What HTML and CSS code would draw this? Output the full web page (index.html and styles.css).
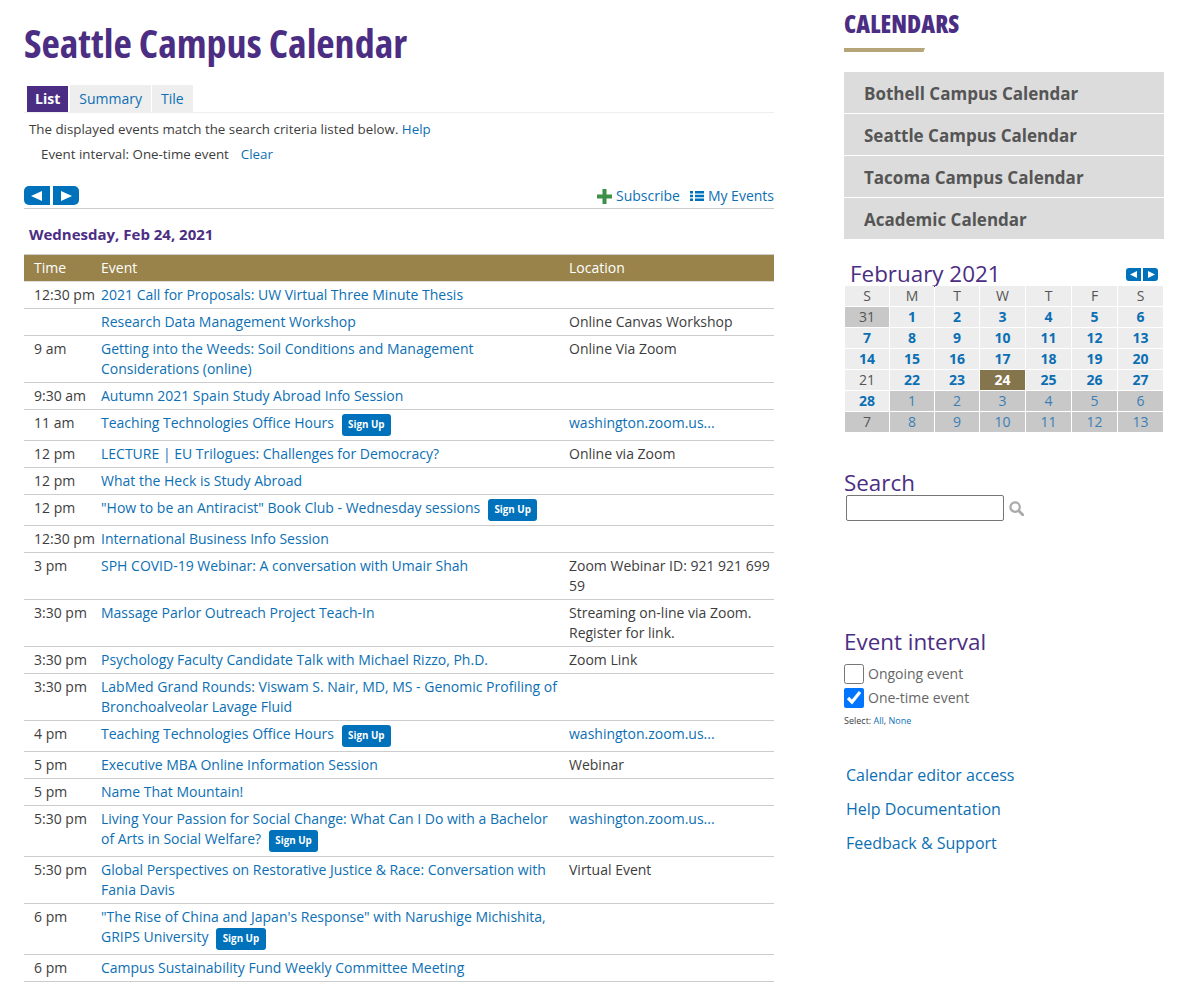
FILE: index.html
```html
<!DOCTYPE html>
<html lang="en">
<head>
<meta charset="utf-8">
<title>Seattle Campus Calendar</title>
<link rel="stylesheet" href="styles.css">
</head>
<body>
<div class="page">
<main class="main">
  <h1 class="title">Seattle Campus Calendar</h1>
  <nav class="tabs">
    <a class="tab active">List</a>
    <a class="tab">Summary</a>
    <a class="tab">Tile</a>
  </nav>
  <p class="note">The displayed events match the search criteria listed below. <a class="link">Help</a></p>
  <p class="filter"><span>Event interval: One-time event</span><a class="link">Clear</a></p>
  <div class="toolbar">
    <div class="arrows">
      <span class="arrow"><svg width="12" height="10" viewBox="0 0 12 10"><path d="M11 0v10L0 5z" fill="#fff"/></svg></span>
      <span class="arrow"><svg width="12" height="10" viewBox="0 0 12 10"><path d="M1 0v10l11-5z" fill="#fff"/></svg></span>
    </div>
    <div class="actions">
      <a class="link action"><svg width="15" height="15" viewBox="0 0 15 15"><path d="M5.500 0h4v5.500H15v4H9.500V15h-4V9.500H0v-4h5.500z" fill="#3d9147"/></svg>Subscribe</a>
      <a class="link action"><svg width="14" height="12" viewBox="0 0 14 12"><path d="M0 1h3v2.500H0zM0 4.800h3v2.500H0zM0 8.600h3v2.500H0zM5 1h9v2.500H5zM5 4.800h9v2.500H5zM5 8.600h9v2.500H5z" fill="#0072bc"/></svg>My Events</a>
    </div>
  </div>
  <h2 class="day">Wednesday, Feb 24, 2021</h2>
  <table class="events">
    <colgroup><col class="c-time"><col class="c-event"><col class="c-loc"></colgroup>
    <thead><tr><th>Time</th><th>Event</th><th>Location</th></tr></thead>
    <tbody>
      <tr><td>12:30 pm</td><td><a class="link">2021 Call for Proposals: UW Virtual Three Minute Thesis</a></td><td></td></tr>
      <tr><td></td><td><a class="link">Research Data Management Workshop</a></td><td>Online Canvas Workshop</td></tr>
      <tr><td>9 am</td><td><a class="link">Getting into the Weeds: Soil Conditions and Management Considerations (online)</a></td><td>Online Via Zoom</td></tr>
      <tr><td>9:30 am</td><td><a class="link">Autumn 2021 Spain Study Abroad Info Session</a></td><td></td></tr>
      <tr><td>11 am</td><td><a class="link">Teaching Technologies Office Hours</a> <a class="signup">Sign Up</a></td><td><a class="link">washington.zoom.us...</a></td></tr>
      <tr><td>12 pm</td><td><a class="link">LECTURE | EU Trilogues: Challenges for Democracy?</a></td><td>Online via Zoom</td></tr>
      <tr><td>12 pm</td><td><a class="link">What the Heck is Study Abroad</a></td><td></td></tr>
      <tr><td>12 pm</td><td><a class="link">"How to be an Antiracist" Book Club - Wednesday sessions</a> <a class="signup">Sign Up</a></td><td></td></tr>
      <tr><td>12:30 pm</td><td><a class="link">International Business Info Session</a></td><td></td></tr>
      <tr><td>3 pm</td><td><a class="link">SPH COVID-19 Webinar: A conversation with Umair Shah</a></td><td>Zoom Webinar ID: 921 921 699 59</td></tr>
      <tr><td>3:30 pm</td><td><a class="link">Massage Parlor Outreach Project Teach-In</a></td><td>Streaming on-line via Zoom. Register for link.</td></tr>
      <tr><td>3:30 pm</td><td><a class="link">Psychology Faculty Candidate Talk with Michael Rizzo, Ph.D.</a></td><td>Zoom Link</td></tr>
      <tr><td>3:30 pm</td><td><a class="link">LabMed Grand Rounds: Viswam S. Nair, MD, MS - Genomic Profiling of Bronchoalveolar Lavage Fluid</a></td><td></td></tr>
      <tr><td>4 pm</td><td><a class="link">Teaching Technologies Office Hours</a> <a class="signup">Sign Up</a></td><td><a class="link">washington.zoom.us...</a></td></tr>
      <tr><td>5 pm</td><td><a class="link">Executive MBA Online Information Session</a></td><td>Webinar</td></tr>
      <tr><td>5 pm</td><td><a class="link">Name That Mountain!</a></td><td></td></tr>
      <tr><td>5:30 pm</td><td><a class="link">Living Your Passion for Social Change: What Can I Do with a Bachelor of Arts in Social Welfare?</a> <a class="signup">Sign Up</a></td><td><a class="link">washington.zoom.us...</a></td></tr>
      <tr><td>5:30 pm</td><td><a class="link">Global Perspectives on Restorative Justice &amp; Race: Conversation with Fania Davis</a></td><td>Virtual Event</td></tr>
      <tr><td>6 pm</td><td><a class="link">"The Rise of China and Japan's Response" with Narushige Michishita, GRIPS University</a> <a class="signup">Sign Up</a></td><td></td></tr>
      <tr><td>6 pm</td><td><a class="link">Campus Sustainability Fund Weekly Committee Meeting</a></td><td></td></tr>
    </tbody>
  </table>
</main>
<aside class="side">
  <h2 class="side-title">CALENDARS</h2>
  <div class="side-rule"></div>
  <ul class="menu">
    <li>Bothell Campus Calendar</li>
    <li>Seattle Campus Calendar</li>
    <li>Tacoma Campus Calendar</li>
    <li>Academic Calendar</li>
  </ul>
  <div class="cal-head">
    <h3 class="month">February 2021</h3>
    <div class="mini-arrows">
      <span class="mini"><svg width="8" height="7" viewBox="0 0 8 7"><path d="M7 0v7L0 3.500z" fill="#fff"/></svg></span>
      <span class="mini"><svg width="8" height="7" viewBox="0 0 8 7"><path d="M1 0v7l7-3.500z" fill="#fff"/></svg></span>
    </div>
  </div>
  <div class="cal">
    <span class="dow">S</span><span class="dow">M</span><span class="dow">T</span><span class="dow">W</span><span class="dow">T</span><span class="dow">F</span><span class="dow">S</span>
    <span class="out plain">31</span><a class="d">1</a><a class="d">2</a><a class="d">3</a><a class="d">4</a><a class="d">5</a><a class="d">6</a>
    <a class="d">7</a><a class="d">8</a><a class="d">9</a><a class="d">10</a><a class="d">11</a><a class="d">12</a><a class="d">13</a>
    <a class="d">14</a><a class="d">15</a><a class="d">16</a><a class="d">17</a><a class="d">18</a><a class="d">19</a><a class="d">20</a>
    <span class="none">21</span><a class="d">22</a><a class="d">23</a><a class="d today">24</a><a class="d">25</a><a class="d">26</a><a class="d">27</a>
    <a class="d">28</a><a class="out">1</a><a class="out">2</a><a class="out">3</a><a class="out">4</a><a class="out">5</a><a class="out">6</a>
    <span class="out plain">7</span><a class="out">8</a><a class="out">9</a><a class="out">10</a><a class="out">11</a><a class="out">12</a><a class="out">13</a>
  </div>
  <h3 class="widget search-title">Search</h3>
  <form class="search">
    <input class="search-input" type="text" aria-label="Search">
    <svg width="15" height="15" viewBox="0 0 16 16"><circle cx="6.500" cy="6.500" r="5" fill="none" stroke="#aaa" stroke-width="2.400"/><path d="M10.300 10.300 15 15" stroke="#aaa" stroke-width="3" stroke-linecap="round"/></svg>
  </form>
  <h3 class="widget interval-title">Event interval</h3>
  <label class="check"><input type="checkbox">Ongoing event</label>
  <label class="check"><input type="checkbox" checked>One-time event</label>
  <p class="select">Select: <a class="link">All</a>, <a class="link">None</a></p>
  <ul class="links">
    <li><a class="link">Calendar editor access</a></li>
    <li><a class="link">Help Documentation</a></li>
    <li><a class="link">Feedback &amp; Support</a></li>
  </ul>
</aside>
</div>
</body>
</html>
```
FILE: styles.css
```css
* { box-sizing: border-box; }
html, body { margin: 0; padding: 0; }
body { font-family: "Open Sans", "Liberation Sans", sans-serif; font-size: 14px; line-height: 20px; color: #3d3d3d; background: #fff; overflow: hidden; height: 986px; }
a { text-decoration: none; }
.link { color: #0c6fb4; }
h1, h2, h3, p, ul { margin: 0; padding: 0; }
ul { list-style: none; }

.page { display: flex; align-items: flex-start; padding-left: 24px; }
.main { width: 750px; flex: none; }
.side { width: 320px; flex: none; margin-left: 70px; }

.title { font-family: "Open Sans", sans-serif; font-stretch: 75%; font-weight: 700; font-size: 40px; line-height: 44px; color: #4b2e83; padding-top: 21px; height: 85px; }

.tabs { display: flex; align-items: flex-end; gap: 1px; height: 28px; padding-left: 3px; border-bottom: 1px solid #eee; }
.tab { background: #eee; color: #0c6fb4; height: 27px; padding: 3px 9px 0; line-height: 21px; }
.tab.active { background: #4b2e83; color: #fff; font-weight: 700; height: 26px; padding: 2px 8px 0; margin-right: 1px; }

.note { font-size: 13.33px; padding: 6px 0 0 5px; height: 32px; line-height: 21px; }
.filter { font-size: 13.33px; padding-left: 17px; height: 25px; display: flex; gap: 12px; line-height: 18px; }

.toolbar { display: flex; justify-content: space-between; align-items: flex-end; height: 39px; padding-top: 18px; border-bottom: 1px solid #ccc; padding-bottom: 3px; width: 750px; }
.arrows { display: flex; gap: 3px; }
.arrow { width: 26px; height: 19px; background: #0072bc; display: flex; align-items: center; justify-content: center; }
.arrow:first-child { border-radius: 5px 0 0 5px; }
.arrow:last-child { border-radius: 0 5px 5px 0; }
.actions { display: flex; gap: 10px; margin-bottom: -1px; }
.action { display: flex; align-items: center; gap: 4px; }

.day { font-size: 15px; font-weight: 700; color: #4b2e83; padding: 15px 0 0 5px; height: 45px; line-height: 20px; }

.events { width: 750px; border-collapse: separate; border-spacing: 0; table-layout: fixed; }
.c-time { width: 77px; }
.c-event { width: 468px; }
.events th { background: #99834a; color: #fff; font-weight: 400; text-align: left; height: 28px; padding: 3px 0 3px 10px; border-top: 1px solid #ccc; border-bottom: 1px solid #ddd; }
.events th:nth-child(2), .events td:nth-child(2) { padding-left: 0; padding-right: 8px; }
.events th:nth-child(3), .events td:nth-child(3) { padding-left: 0; }
.events td { vertical-align: top; padding: 3px 0 3px 10px; border-bottom: 1px solid #ccc; }
.signup { display: inline-block; vertical-align: top; margin: 1px 0 1px 4px; height: 22px; padding: 0 6.5px; line-height: 22px; background: #0072bc; color: #fff; font-size: 9.8px; font-weight: 700; border-radius: 3px; }

.side-title { font-family: "Open Sans", sans-serif; font-stretch: 75%; font-weight: 800; font-size: 24px; line-height: 28px; color: #4b2e83; padding-top: 10px; height: 48px; letter-spacing: 0.1px; }
.side-rule { width: 81px; height: 4px; background: #b7a57a; clip-path: polygon(0 0, 100% 0, 98% 100%, 0 100%); margin-bottom: 20px; }
.menu { display: flex; flex-direction: column; gap: 1px; }
.menu li { height: 41px; background: #dcdcdc; color: #555; font-weight: 700; font-size: 17px; line-height: 43px; padding-left: 20px; }

.cal-head { display: flex; justify-content: space-between; align-items: flex-end; height: 47px; padding: 0 6px 0 6px; }
.month { font-weight: 400; font-size: 22.4px; line-height: 26px; color: #4b2e83; height: 26px; margin-bottom: -1px; }
.mini-arrows { display: flex; gap: 2px; margin: 0 0 5px; }
.mini { width: 15px; height: 13px; background: #0072bc; display: flex; align-items: center; justify-content: center; }
.mini:first-child { border-radius: 3px 0 0 3px; }
.mini:last-child { border-radius: 0 3px 3px 0; }

.cal { display: grid; grid-template-columns: 44px 44px 44px 45px 45px 45px 45px; grid-auto-rows: 20px; gap: 1px; width: 318px; margin-left: 1px; text-align: center; line-height: 20px; }
.dow, .none, .d { background: #ededed; }
.dow { color: #555; }
.none { color: #555; }
.d { color: #0c6fb4; font-weight: 700; }
.today { background: #85754d; color: #fff; }
.out { background: #c8c8c8; color: #3b7fb5; }
.out.plain { color: #555; }

.widget { font-weight: 400; font-size: 22.4px; line-height: 26px; color: #4b2e83; }
.search-title { margin-top: 38px; height: 25px; }
.search { display: flex; align-items: center; gap: 5px; margin-left: 2px; height: 26px; }
.search-input { width: 158px; height: 26px; border: 1px solid #767676; border-radius: 2px; background: #fff; padding: 0; margin: 0; }

.interval-title { margin-top: 108px; height: 31px; }
.check { display: flex; align-items: center; gap: 4px; height: 20px; margin-top: 4px; color: #666; font-size: 14px; }
.check input { width: 20px; height: 20px; margin: 0; accent-color: #0075ff; }
.select { font-size: 9px; line-height: 12px; margin-top: 7px; }
.links { margin: 37px 0 0 2px; }
.links li { font-size: 16px; line-height: 22px; margin-bottom: 12px; }
```
